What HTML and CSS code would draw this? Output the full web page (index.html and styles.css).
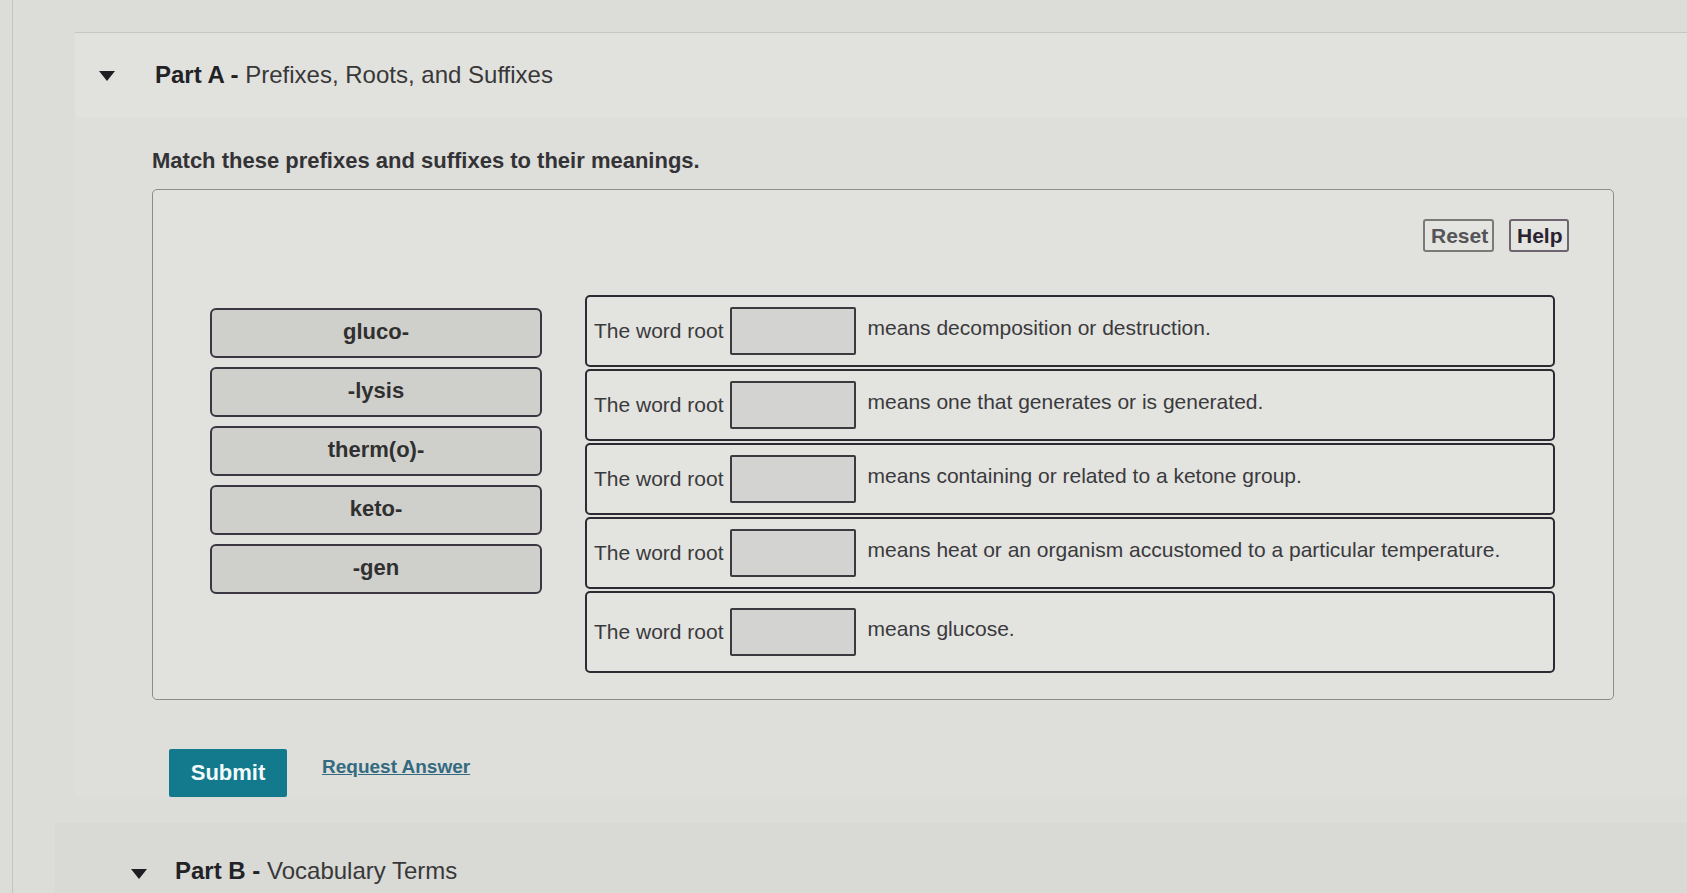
FILE: index.html
```html
<!DOCTYPE html>
<html>
<head>
<meta charset="utf-8">
<link rel="stylesheet" href="styles.css">
</head>
<body>
<div class="page">
  <section class="part">
    <div class="part-head">
      <span class="tri"></span>
      <h2 class="part-title"><b>Part A -</b> Prefixes, Roots, and Suffixes</h2>
    </div>
    <div class="part-body">
      <p class="prompt">Match these prefixes and suffixes to their meanings.</p>
      <div class="activity">
        <div class="tools">
          <button class="tool reset">Reset</button>
          <button class="tool help">Help</button>
        </div>
        <div class="match">
          <div class="items">
            <div class="item">gluco-</div>
            <div class="item">-lysis</div>
            <div class="item">therm(o)-</div>
            <div class="item">keto-</div>
            <div class="item">-gen</div>
          </div>
          <div class="rows">
            <div class="row"><span class="lead">The word root</span><span class="drop"></span><span class="def">means decomposition or destruction.</span></div>
            <div class="row"><span class="lead">The word root</span><span class="drop"></span><span class="def">means one that generates or is generated.</span></div>
            <div class="row"><span class="lead">The word root</span><span class="drop"></span><span class="def">means containing or related to a ketone group.</span></div>
            <div class="row"><span class="lead">The word root</span><span class="drop"></span><span class="def">means heat or an organism accustomed to a particular temperature.</span></div>
            <div class="row last"><span class="lead">The word root</span><span class="drop"></span><span class="def">means glucose.</span></div>
          </div>
        </div>
      </div>
      <div class="actions">
        <button class="submit">Submit</button>
        <a class="request" href="#">Request Answer</a>
      </div>
    </div>
  </section>
  <section class="part part-b">
    <div class="part-head">
      <span class="tri"></span>
      <h2 class="part-title"><b>Part B -</b> Vocabulary Terms</h2>
    </div>
  </section>
</div>
</body>
</html>
```

FILE: styles.css
```css
html, body {
  margin: 0;
  padding: 0;
  background: #dcdcd9;
  font-family: "Liberation Sans", Arial, sans-serif;
  color: #2e2e2e;
  overflow: hidden;
}

.page {
  margin-left: 12px;
  border-left: 1px solid #c3c3c1;
  height: 893px;
  padding-top: 32px;
  box-sizing: border-box;
}

.part {
  margin-left: 62px;
  border-top: 1px solid #c6c6c4;
  background: #dfdfdc;
}

.part-head {
  display: flex;
  align-items: center;
  height: 84px;
  padding-left: 24px;
  background: #e1e1de;
}

.tri {
  width: 0;
  height: 0;
  border-left: 8px solid transparent;
  border-right: 8px solid transparent;
  border-top: 10px solid #1e1e22;
  margin-right: 40px;
  margin-top: 2px;
}

.part-title {
  margin: 0;
  font-size: 24px;
  font-weight: normal;
  color: #383838;
}

.part-title b {
  color: #222226;
}

.part-body {
  padding-left: 77px;
  padding-right: 70px;
  background: #dededb;
}

.prompt {
  margin: 0;
  padding-top: 30px;
  font-size: 22px;
  font-weight: bold;
  color: #333336;
  line-height: 28px;
}

.activity {
  margin-top: 14px;
  width: 1462px;
  box-sizing: border-box;
  border: 1px solid #8c8c8c;
  border-radius: 5px;
  background: #e1e1de;
  padding: 29px 58px 26px 57px;
}

.tools {
  display: flex;
  justify-content: flex-end;
  gap: 15px;
  margin-right: -14px;
}

.tool {
  font-family: "Liberation Sans", Arial, sans-serif;
  font-size: 21px;
  font-weight: bold;
  height: 33px;
  padding: 0 6px;
  border: 2px solid #7a7a7a;
  border-radius: 3px;
  background: #e4e4e1;
  line-height: 28px;
}

.reset {
  width: 71px;
  color: #555558;
}

.help {
  width: 60px;
  color: #2a2230;
  border-color: #6e6470;
}

.match {
  display: flex;
  gap: 43px;
  margin-top: 43px;
}

.items {
  width: 332px;
  padding-top: 13px;
  display: flex;
  flex-direction: column;
  gap: 9px;
}

.item {
  height: 50px;
  box-sizing: border-box;
  border: 2px solid #3b3641;
  border-radius: 6px;
  background: #cfcfcc;
  display: flex;
  align-items: center;
  justify-content: center;
  font-size: 22px;
  font-weight: bold;
  color: #303030;
  padding-bottom: 2px;
}

.rows {
  flex: 1;
  display: flex;
  flex-direction: column;
  gap: 2px;
}

.row {
  height: 72px;
  box-sizing: border-box;
  border: 2px solid #2e2a33;
  border-radius: 5px;
  background: #e3e3e0;
  display: flex;
  align-items: center;
  padding-left: 7px;
  font-size: 21px;
  color: #3a3a3c;
}

.row.last {
  height: 82px;
}

.lead {
  white-space: nowrap;
}

.drop {
  width: 126px;
  height: 48px;
  box-sizing: border-box;
  border: 2px solid #3c3a3e;
  border-radius: 2px;
  background: #d3d3d1;
  margin: 0 12px 0 6px;
  flex-shrink: 0;
}

.def {
  white-space: nowrap;
  margin-top: -6px;
}

.actions {
  display: flex;
  align-items: center;
  gap: 35px;
  margin-top: 49px;
  padding-left: 17px;
}

.submit {
  width: 118px;
  height: 48px;
  border: none;
  border-radius: 2px;
  background: #13798d;
  color: #f2fbfb;
  font-family: "Liberation Sans", Arial, sans-serif;
  font-size: 22px;
  font-weight: bold;
}

.request {
  font-size: 19px;
  font-weight: bold;
  color: #336a80;
  text-decoration: underline;
  margin-top: -12px;
}

.part-b {
  margin-top: 26px;
  margin-left: 42px;
  border-top: none;
  background: #d9d9d6;
}

.part-b .part-head {
  height: 100px;
  padding-left: 76px;
  background: #d9d9d6;
  align-items: flex-start;
  padding-top: 34px;
  box-sizing: border-box;
}

.part-b .tri {
  margin-top: 12px;
  margin-right: 28px;
}
```
